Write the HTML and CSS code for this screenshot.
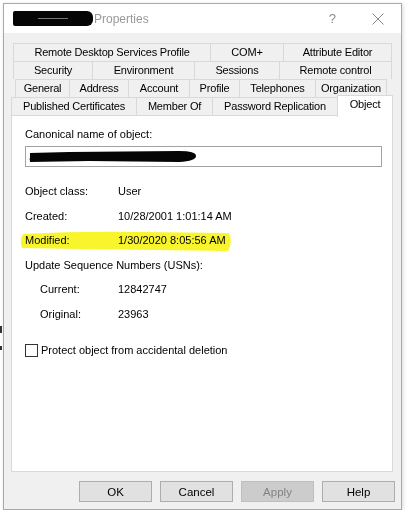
FILE: index.html
```html
<!DOCTYPE html>
<html>
<head>
  <link rel="stylesheet" href="styles.css">
</head>
<body>

  <div class="behind">
    <span class="mark mark-1"></span>
    <span class="mark mark-2"></span>
  </div>

  <div class="window">
    <div class="titlebar">
      <span class="redact-title"><span class="redact-line"></span></span>
      <span class="title">Properties</span>
      <span class="help-btn">?</span>
      <span class="close-btn">
        <svg width="12" height="12" viewBox="0 0 12 12">
          <path d="M0.5 0.5 L11.5 11.5 M11.5 0.5 L0.5 11.5" stroke="#8a8a8a" stroke-width="1" fill="none"/>
        </svg>
      </span>
    </div>

    <div class="main">
      <div class="tabs">
        <div class="tab-row row-1">
          <div class="tab">Remote Desktop Services Profile</div>
          <div class="tab">COM+</div>
          <div class="tab">Attribute Editor</div>
        </div>
        <div class="tab-row row-2">
          <div class="tab">Security</div>
          <div class="tab">Environment</div>
          <div class="tab">Sessions</div>
          <div class="tab">Remote control</div>
        </div>
        <div class="tab-row row-3">
          <div class="tab">General</div>
          <div class="tab">Address</div>
          <div class="tab">Account</div>
          <div class="tab">Profile</div>
          <div class="tab">Telephones</div>
          <div class="tab">Organization</div>
        </div>
        <div class="tab-row row-4">
          <div class="tab">Published Certificates</div>
          <div class="tab">Member Of</div>
          <div class="tab">Password Replication</div>
          <div class="tab active">Object</div>
        </div>
      </div>

      <div class="panel">
        <div class="cn-label">Canonical name of object:</div>
        <div class="cn-field">
          <span class="cn-text">ai</span>
          <svg class="redact-field" width="170" height="15" viewBox="0 0 170 15">
            <path d="M1 4 L40 3 L150 2 Q167 2 167 7 Q167 12 150 13 L60 12 L1 13 Z" fill="#050505"/>
          </svg>
        </div>

        <div class="info">
          <div class="info-row">
            <span class="key">Object class:</span>
            <span class="val">User</span>
          </div>
          <div class="info-row">
            <span class="key">Created:</span>
            <span class="val">10/28/2001 1:01:14 AM</span>
          </div>
          <div class="info-row">
            <span class="key">Modified:</span>
            <span class="val">1/30/2020 8:05:56 AM</span>
          </div>
          <div class="info-row">
            <span class="key wide">Update Sequence Numbers (USNs):</span>
          </div>
          <div class="info-row sub">
            <span class="key">Current:</span>
            <span class="val">12842747</span>
          </div>
          <div class="info-row sub">
            <span class="key">Original:</span>
            <span class="val">23963</span>
          </div>
        </div>

        <label class="check-row">
          <span class="checkbox"></span>
          <span>Protect object from accidental deletion</span>
        </label>

        <svg class="highlight" width="214" height="24" viewBox="0 0 214 24">
          <path d="M4 5 Q0 12 3 19 L60 20 Q140 21 209 22 Q214 13 210 4 L120 3 Q60 2 4 5 Z" fill="#f9f52c"/>
        </svg>
      </div>

      <div class="buttons">
        <button class="btn">OK</button>
        <button class="btn">Cancel</button>
        <button class="btn disabled">Apply</button>
        <button class="btn">Help</button>
      </div>
    </div>
  </div>

</body>
</html>
```

FILE: styles.css
```css
body {
  margin: 0;
  background: #ffffff;
  font-family: "Liberation Sans", Arial, sans-serif;
  font-size: 11px;
  color: #000;
}

.behind {
  position: absolute;
  left: 0;
  top: 0;
}

.mark {
  position: absolute;
  left: 0;
  width: 2px;
  background: #333;
}

.mark-1 {
  top: 326px;
  height: 7px;
}

.mark-2 {
  top: 346px;
  height: 4px;
}

.window {
  margin: 3px 0 0 3px;
  width: 397px;
  height: 505px;
  border: 1px solid #a9a9a9;
  background: #f0f0f0;
  box-shadow: 1px 1px 4px rgba(0, 0, 0, 0.15);
  display: flex;
  flex-direction: column;
}

.titlebar {
  height: 29px;
  background: #fff;
  display: flex;
  align-items: center;
  padding-left: 9px;
}

.redact-title {
  width: 80px;
  height: 15px;
  background: #050505;
  border-radius: 2px 6px 6px 2px;
  display: flex;
  align-items: center;
  justify-content: center;
}

.redact-line {
  width: 30px;
  height: 1px;
  background: #777;
}

.title {
  color: #9a9a9a;
  font-size: 12px;
  margin-left: 1px;
}

.help-btn {
  margin-left: auto;
  color: #8a8a8a;
  font-size: 13px;
  margin-right: 36px;
}

.close-btn {
  display: flex;
  margin-right: 17px;
}

.main {
  flex: 1;
  padding: 10px 0 0 7px;
  display: flex;
  flex-direction: column;
}

.tabs {
  display: flex;
  flex-direction: column;
}

.tab-row {
  display: grid;
  height: 18px;
}

.row-1 {
  margin-left: 2px;
  width: 379px;
  grid-template-columns: 197px 73px 109px;
}

.row-2 {
  margin-left: 2px;
  width: 379px;
  grid-template-columns: 79px 102px 85px 113px;
}

.row-3 {
  margin-left: 4px;
  width: 372px;
  grid-template-columns: 54px 59px 61px 50px 76px 72px;
}

.row-4 {
  width: 382px;
  grid-template-columns: 125px 76px 125px 56px;
}

.tab {
  border-top: 1px solid #d9d9d9;
  border-left: 1px solid #d9d9d9;
  background: #f0f0f0;
  text-align: center;
  line-height: 17px;
  white-space: nowrap;
  overflow: hidden;
  letter-spacing: -0.2px;
}

.tab:last-child {
  border-right: 1px solid #d9d9d9;
}

.tab.active {
  background: #fff;
  margin-top: -2px;
  line-height: 17px;
  height: 21px;
  position: relative;
  z-index: 1;
  border-right: 1px solid #d9d9d9;
}

.panel {
  position: relative;
  height: 355px;
  border: 1px solid #d9d9d9;
  background: #fff;
  padding-left: 13px;
  width: 367px;
}

.cn-label {
  margin-top: 11px;
  height: 15px;
  line-height: 15px;
}

.cn-field {
  margin-top: 4px;
  width: 355px;
  height: 19px;
  border: 1px solid #a2a2a2;
  display: flex;
  align-items: center;
  position: relative;
}

.cn-text {
  margin-left: 3px;
  color: #666;
}

.redact-field {
  position: absolute;
  left: 3px;
  top: 2px;
}

.info {
  margin-top: 12px;
}

.info-row {
  height: 24.5px;
  line-height: 24.5px;
  display: flex;
}

.key {
  width: 93px;
  white-space: nowrap;
}

.sub {
  padding-left: 15px;
}

.sub .key {
  width: 78px;
}

.check-row {
  margin-top: 16px;
  display: flex;
  align-items: center;
  height: 16px;
  gap: 3px;
}

.checkbox {
  width: 11px;
  height: 11px;
  border: 1px solid #333;
  background: #fff;
}

.highlight {
  position: absolute;
  left: 7px;
  top: 113px;
  mix-blend-mode: multiply;
}

.buttons {
  margin-top: 9px;
  display: flex;
  justify-content: flex-end;
  gap: 8px;
  padding-right: 6px;
}

.btn {
  width: 73px;
  height: 21px;
  background: #e1e1e1;
  border: 1px solid #adadad;
  font-family: "Liberation Sans", Arial, sans-serif;
  font-size: 11.5px;
  color: #000;
  padding: 0;
}

.btn.disabled {
  background: #cccccc;
  border-color: #bfbfbf;
  color: #838383;
}
```
